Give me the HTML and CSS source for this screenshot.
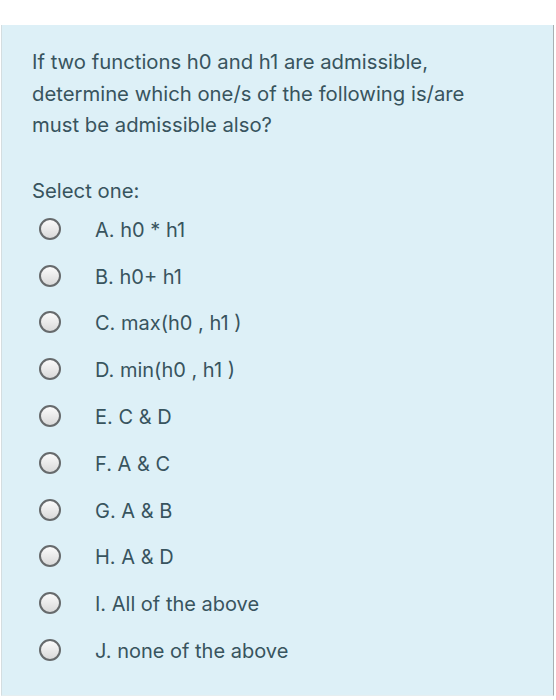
FILE: index.html
```html
<!DOCTYPE html>
<html lang="en">
<head>
<meta charset="utf-8">
<title>Question</title>
<link rel="stylesheet" href="styles.css">
</head>
<body>
<div class="card">
  <div class="qtext">If two functions h0 and h1 are admissible, determine which one/s of the following is/are must be admissible also?</div>
  <div class="prompt">Select one:</div>
  <div class="answers">
    <label class="opt"><span class="radio"></span><span class="lbl">A. h0 * h1</span></label>
    <label class="opt"><span class="radio"></span><span class="lbl">B. h0+ h1</span></label>
    <label class="opt"><span class="radio"></span><span class="lbl">C. max(h0 , h1 )</span></label>
    <label class="opt"><span class="radio"></span><span class="lbl">D. min(h0 , h1 )</span></label>
    <label class="opt"><span class="radio"></span><span class="lbl">E. C &amp; D</span></label>
    <label class="opt"><span class="radio"></span><span class="lbl">F. A &amp; C</span></label>
    <label class="opt"><span class="radio"></span><span class="lbl">G. A &amp; B</span></label>
    <label class="opt"><span class="radio"></span><span class="lbl">H. A &amp; D</span></label>
    <label class="opt"><span class="radio"></span><span class="lbl">I. All of the above</span></label>
    <label class="opt"><span class="radio"></span><span class="lbl">J. none of the above</span></label>
  </div>
</div>
</body>
</html>
```

FILE: styles.css
```css
html, body {
  margin: 0;
  padding: 0;
  background: #ffffff;
}
body {
  font-family: Inter, "Liberation Sans", Arial, sans-serif;
  color: #38545e;
  padding-top: 25px;
  padding-left: 1px;
  padding-right: 2px;
}
.card {
  background: #ddf0f7;
  border-left: 1px solid #d4dde0;
  border-right: 1px solid #a9b0b3;
  border-bottom: 1px solid #e6eef0;
  height: 671px;
  box-sizing: border-box;
  padding: 21px 20px 0 30px;
}
.qtext {
  font-size: 20.3px;
  line-height: 31.5px;
  width: 475px;
}
.prompt {
  font-size: 20.3px;
  line-height: 32px;
  margin-top: 34px;
}
.answers {
  display: flex;
  flex-direction: column;
  margin-top: 0;
}
.opt {
  display: flex;
  align-items: center;
  height: 46.8px;
  font-size: 20px;
}
.radio {
  width: 18px;
  height: 18px;
  border: 2px solid #666a6c;
  border-radius: 50%;
  background: linear-gradient(#fbfbfb, #d9d9d9);
  margin-left: 7px;
  margin-top: -2px;
  flex: none;
}
.lbl {
  margin-left: 34px;
}
```
